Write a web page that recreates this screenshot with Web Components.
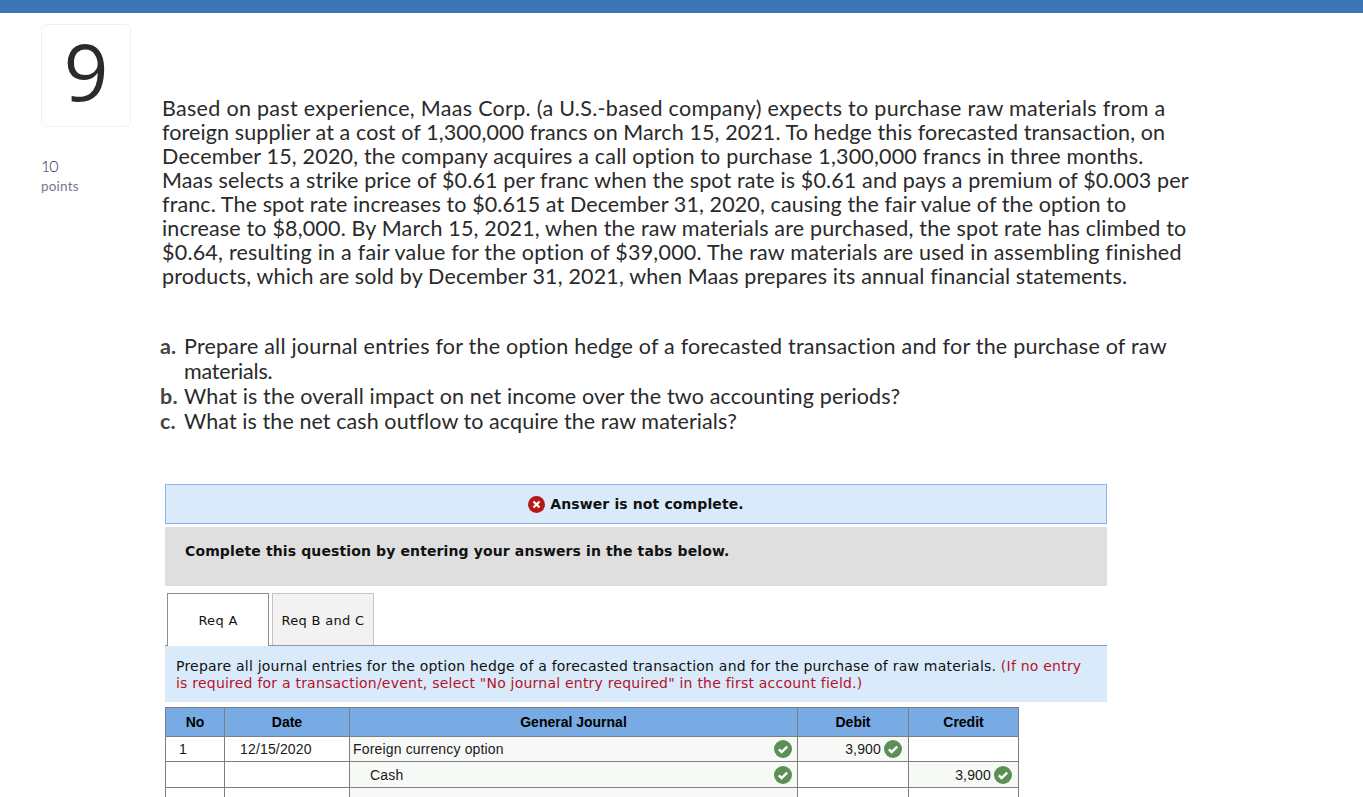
<!DOCTYPE html>
<html>
<head>
<meta charset="utf-8">
<style>
  html, body { margin: 0; height: 797px; overflow: hidden; background: #fff; }
  body { font-family: Lato, "Open Sans", sans-serif; color: #222; }
</style>
</head>
<body>
<top-bar></top-bar>
<question-page>
  <question-side slot="side" number="9" points="10"></question-side>
  <question-text></question-text>
  <part-list></part-list>
  <answer-panel></answer-panel>
</question-page>

<script>
// small helper so every element gets an open shadow root from a string
function shadow(el, html) {
  el.attachShadow({ mode: 'open' }).innerHTML = html;
}

class TopBar extends HTMLElement {
  connectedCallback() {
    shadow(this, `<style>:host { display: block; height: 13px; background: #3b76b8; }</style>`);
  }
}

class QuestionPage extends HTMLElement {
  connectedCallback() {
    shadow(this, `
      <style>
        :host { display: flex; padding: 11px 0 0 41px; }
        .side { width: 90px; flex: none; }
        .main { margin-left: 31px; flex: 1; min-width: 0; }
      </style>
      <div class="side"><slot name="side"></slot></div>
      <div class="main"><slot></slot></div>`);
  }
}

class QuestionSide extends HTMLElement {
  connectedCallback() {
    shadow(this, `
      <style>
        :host { display: block; }
        .num {
          box-sizing: border-box; height: 103px; border: 1px solid #f0f0f0; border-radius: 6px;
          font-family: "Open Sans", sans-serif; font-size: 78px; line-height: 93px; text-align: center; color: #2b2b2b;
        }
        .pts { margin-top: 29px; font-size: 16px; font-weight: 300; line-height: 20px; letter-spacing: -1px; color: #2f2f5c; }
        .lbl { font-size: 13.5px; line-height: 20px; letter-spacing: .2px; color: #77778c; }
      </style>
      <div class="num">${this.getAttribute('number')}</div>
      <div class="pts">${this.getAttribute('points')}</div>
      <div class="lbl">points</div>`);
  }
}

// each line keeps its own tracking, the digits in this font run wider than in the original
const STATEMENT = [
  ['Based on past experience, Maas Corp. (a U.S.-based company) expects to purchase raw materials from a', .3],
  ['foreign supplier at a cost of 1,300,000 francs on March 15, 2021. To hedge this forecasted transaction, on', .1],
  ['December 15, 2020, the company acquires a call option to purchase 1,300,000 francs in three months.', .18],
  ['Maas selects a strike price of $0.61 per franc when the spot rate is $0.61 and pays a premium of $0.003 per', .14],
  ['franc. The spot rate increases to $0.615 at December 31, 2020, causing the fair value of the option to', .11],
  ['increase to $8,000. By March 15, 2021, when the raw materials are purchased, the spot rate has climbed to', .17],
  ['$0.64, resulting in a fair value for the option of $39,000. The raw materials are used in assembling finished', .22],
  ['products, which are sold by December 31, 2021, when Maas prepares its annual financial statements.', .16]
];

class QuestionText extends HTMLElement {
  connectedCallback() {
    const lines = STATEMENT.map(([t, s]) => `<div style="letter-spacing:${s}px">${t}</div>`).join('');
    shadow(this, `
      <style>
        :host { display: block; padding-top: 72px; font-size: 21.5px; line-height: 24px; color: #2a2a2a; white-space: nowrap; font-variant-ligatures: none; }
      </style>
      ${lines}`);
  }
}

class PartList extends HTMLElement {
  connectedCallback() {
    shadow(this, `
      <style>
        :host { display: block; margin: 46px 0 0 -2px; font-size: 21.5px; line-height: 25px; color: #2a2a2a; white-space: nowrap; font-variant-ligatures: none; }
        .row { display: flex; }
        b { width: 24px; flex: none; color: #444; letter-spacing: .2px; }
      </style>
      <div class="row"><b>a.</b><span><span style="letter-spacing:.22px">Prepare all journal entries for the option hedge of a forecasted transaction and for the purchase of raw</span><br><span style="letter-spacing:-.2px">materials.</span></span></div>
      <div class="row"><b>b.</b><span style="letter-spacing:.155px">What is the overall impact on net income over the two accounting periods?</span></div>
      <div class="row"><b>c.</b><span style="letter-spacing:.08px">What is the net cash outflow to acquire the raw materials?</span></div>`);
  }
}

class StatusIcon extends HTMLElement {
  connectedCallback() {
    const ok = this.getAttribute('type') === 'ok';
    shadow(this, `
      <style>
        :host { display: inline-block; width: 18px; height: 18px; flex: none; vertical-align: middle; }
        svg { display: block; width: 100%; height: 100%; }
      </style>
      <svg viewBox="0 0 18 18">
        <circle cx="9" cy="9" r="9" fill="${ok ? '#5a8f56' : '#b81717'}"/>
        ${ok
          ? '<path d="M4.8 9.4 7.6 12 13.2 6.6" fill="none" stroke="#fff" stroke-width="2.4"/>'
          : '<path d="M5.8 5.8 12.2 12.2M12.2 5.8 5.8 12.2" fill="none" stroke="#fff" stroke-width="2.4"/>'}
      </svg>`);
  }
}

class AnswerPanel extends HTMLElement {
  connectedCallback() {
    shadow(this, `
      <style>
        :host { display: block; width: 942px; margin: 50px 0 0 3px; font-family: "DejaVu Sans", Verdana, sans-serif; color: #111; }
        .alert {
          box-sizing: border-box; height: 40px; background: #d9ebfa; border: 1px solid #8db4e2;
          display: flex; align-items: center; justify-content: center; gap: 5px;
          font-size: 14px; letter-spacing: .12px; font-weight: bold;
        }
        .alert status-icon { width: 17px; height: 17px; }
        .note {
          box-sizing: border-box; height: 59px; margin-top: 3px; background: #dfdfdf;
          padding: 15px 20px; font-size: 14px; letter-spacing: .12px; font-weight: bold; line-height: 18px;
        }
        .tabs { display: flex; gap: 3px; margin-top: 7px; padding-left: 2px; border-bottom: 1px solid #8e9aa5; height: 52px; }
        .tab {
          box-sizing: border-box; width: 102px; height: 52px; padding-top: 1px; display: flex; align-items: center; justify-content: center;
          font-size: 13px; letter-spacing: .3px; background: #f2f2f2; border: 1px solid #c4c4c4; border-bottom: 0;
        }
        .tab.on { background: #fff; border-color: #8f8f8f; height: 53px; padding-top: 0; }
        .intro {
          box-sizing: border-box; height: 56px; background: #d9ebfa; padding: 12px 11px 0;
          font-size: 14px; letter-spacing: .22px; line-height: 17px; white-space: nowrap;
        }
        .intro em { font-style: normal; color: #b51228; }
      </style>
      <div class="alert"><status-icon type="bad"></status-icon><span>Answer is not complete.</span></div>
      <div class="note">Complete this question by entering your answers in the tabs below.</div>
      <div class="tabs"><div class="tab on">Req A</div><div class="tab">Req B and C</div></div>
      <div class="intro">Prepare all journal entries for the option hedge of a forecasted transaction and for the purchase of raw materials. <em>(If no entry<br>is required for a transaction/event, select "No journal entry required" in the first account field.)</em></div>
      <journal-table></journal-table>`);
  }
}

class JournalTable extends HTMLElement {
  connectedCallback() {
    shadow(this, `
      <style>
        :host { display: block; margin-top: 5px; font-family: "Liberation Sans", Arial, sans-serif; font-size: 14px; letter-spacing: .16px; color: #1a1a1a; }
        table { border-collapse: collapse; table-layout: fixed; width: 853px; }
        th, td { border: 1px solid #7f7f7f; padding: 0; height: 24px; }
        tr.tall td { height: 25px; }
        th { height: 28px; background: #78aae4; font-weight: bold; color: #000; letter-spacing: 0; }
        td { background: #fff; }
        td.acct { background: #f7f9f6; padding-left: 3px; }
        td.acct.in { padding-left: 20px; }
        td.date { padding-left: 15px; }
        td.first { padding-left: 13px; }
        .cell { display: flex; align-items: center; justify-content: space-between; padding-right: 5px; }
        .amt { display: flex; align-items: center; justify-content: flex-end; gap: 3px; padding-right: 6px; }
        .shade { background: #f7f9f6; }
      </style>
      <table>
        <colgroup><col style="width:59px"><col style="width:125px"><col style="width:448px"><col style="width:111px"><col style="width:110px"></colgroup>
        <tr><th>No</th><th>Date</th><th>General Journal</th><th>Debit</th><th>Credit</th></tr>
        <tr>
          <td class="first">1</td><td class="date">12/15/2020</td>
          <td class="acct"><div class="cell"><span>Foreign currency option</span><status-icon type="ok"></status-icon></div></td>
          <td class="shade"><div class="amt">3,900<status-icon type="ok"></status-icon></div></td>
          <td></td>
        </tr>
        <tr class="tall">
          <td></td><td></td>
          <td class="acct in"><div class="cell"><span>Cash</span><status-icon type="ok"></status-icon></div></td>
          <td></td>
          <td class="shade"><div class="amt">3,900<status-icon type="ok"></status-icon></div></td>
        </tr>
        <tr><td></td><td></td><td class="acct"></td><td></td><td></td></tr>
      </table>`);
  }
}

customElements.define('top-bar', TopBar);
customElements.define('question-page', QuestionPage);
customElements.define('question-side', QuestionSide);
customElements.define('question-text', QuestionText);
customElements.define('part-list', PartList);
customElements.define('status-icon', StatusIcon);
customElements.define('answer-panel', AnswerPanel);
customElements.define('journal-table', JournalTable);
</script>
</body>
</html>
